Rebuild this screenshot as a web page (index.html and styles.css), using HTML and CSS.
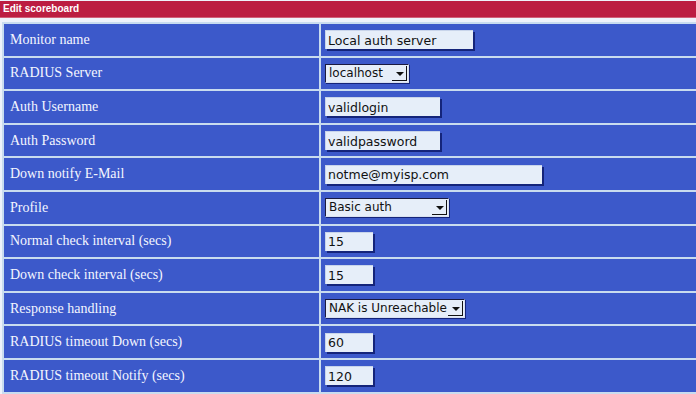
FILE: index.html
```html
<!DOCTYPE html>
<html lang="en">

<head>
    <meta charset="UTF-8">
    <title>Edit scoreboard</title>
    <link rel="stylesheet" href="styles.css">
</head>

<body>
    <div class="title-bar">Edit scoreboard</div>
    <table class="form-table">
        <tr>
            <td class="label">Monitor name</td>
            <td class="field"><input type="text" class="txt w-name" value="Local auth server"></td>
        </tr>
        <tr>
            <td class="label">RADIUS Server</td>
            <td class="field">
                <div class="sel w-server"><span>localhost</span><b class="arr"></b></div>
            </td>
        </tr>
        <tr>
            <td class="label">Auth Username</td>
            <td class="field"><input type="text" class="txt w-mid" value="validlogin"></td>
        </tr>
        <tr>
            <td class="label">Auth Password</td>
            <td class="field"><input type="text" class="txt w-mid" value="validpassword"></td>
        </tr>
        <tr>
            <td class="label">Down notify E-Mail</td>
            <td class="field"><input type="text" class="txt w-mail" value="notme@myisp.com"></td>
        </tr>
        <tr>
            <td class="label">Profile</td>
            <td class="field">
                <div class="sel w-profile"><span>Basic auth</span><b class="arr"></b></div>
            </td>
        </tr>
        <tr>
            <td class="label">Normal check interval (secs)</td>
            <td class="field"><input type="text" class="txt w-num" value="15"></td>
        </tr>
        <tr>
            <td class="label">Down check interval (secs)</td>
            <td class="field"><input type="text" class="txt w-num" value="15"></td>
        </tr>
        <tr>
            <td class="label">Response handling</td>
            <td class="field">
                <div class="sel w-resp"><span>NAK is Unreachable</span><b class="arr"></b></div>
            </td>
        </tr>
        <tr>
            <td class="label">RADIUS timeout Down (secs)</td>
            <td class="field"><input type="text" class="txt w-num" value="60"></td>
        </tr>
        <tr>
            <td class="label">RADIUS timeout Notify (secs)</td>
            <td class="field"><input type="text" class="txt w-num" value="120"></td>
        </tr>
    </table>
</body>

</html>
```

FILE: styles.css
```css
* {
    margin: 0;
    padding: 0;
    box-sizing: border-box;
}

html,
body {
    background-color: #eef2fa;
    overflow: hidden;
}

body {
    width: 720px;
    padding-top: 1px;
}

.title-bar {
    height: 17px;
    background-color: #bc1d41;
    color: #fff;
    font-family: "Liberation Sans", sans-serif;
    font-size: 10px;
    font-weight: bold;
    line-height: 16px;
    padding-left: 3px;
    border-bottom: 1px solid #d06078;
}

.form-table {
    margin-top: 4px;
    margin-left: 2px;
    width: 718px;
    border-collapse: separate;
    border-spacing: 2px;
    background-color: #c9dcef;
}

.form-table td {
    background-color: #3c59ca;
    height: 31.6px;
    vertical-align: middle;
}

.label {
    width: 315px;
    padding-left: 6px;
    color: #f4f6ff;
    font-family: "Liberation Serif", serif;
    font-size: 14px;
}

.field {
    padding-left: 4px;
}

.txt,
.sel {
    display: block;
    height: 19px;
    background-color: #e6eef9;
    color: #111;
    font-family: "DejaVu Sans", sans-serif;
    font-size: 12.5px;
}

.txt {
    border: none;
    border-top: 1px solid #c8d4ea;
    border-left: 1px solid #c8d4ea;
    box-shadow: 2px 2px 0 #14247a;
    padding-left: 2px;
    outline: none;
}

.sel {
    position: relative;
    border-top: 1px solid #1a1a40;
    border-left: 1px solid #1a1a40;
    border-right: 1px solid #d8e0f0;
    border-bottom: 1px solid #d8e0f0;
    box-shadow: 1px 1px 0 #14247a;
    padding-left: 3px;
    font-size: 12px;
    line-height: 17px;
    white-space: nowrap;
}

.sel .arr {
    position: absolute;
    right: 1px;
    top: 1px;
    width: 15px;
    height: 15px;
    background-color: #e6eef9;
    border-right: 1px solid #111;
    border-bottom: 1px solid #111;
}

.sel .arr::after {
    content: "";
    position: absolute;
    left: 4px;
    top: 6px;
    border-left: 4px solid transparent;
    border-right: 4px solid transparent;
    border-top: 4px solid #111;
}

.w-name {
    width: 148px;
}

.w-server {
    width: 84px;
}

.w-mid {
    width: 115px;
}

.w-mail {
    width: 217px;
}

.w-profile {
    width: 124px;
}

.w-num {
    width: 48px;
}

.w-resp {
    width: 140px;
}
```
